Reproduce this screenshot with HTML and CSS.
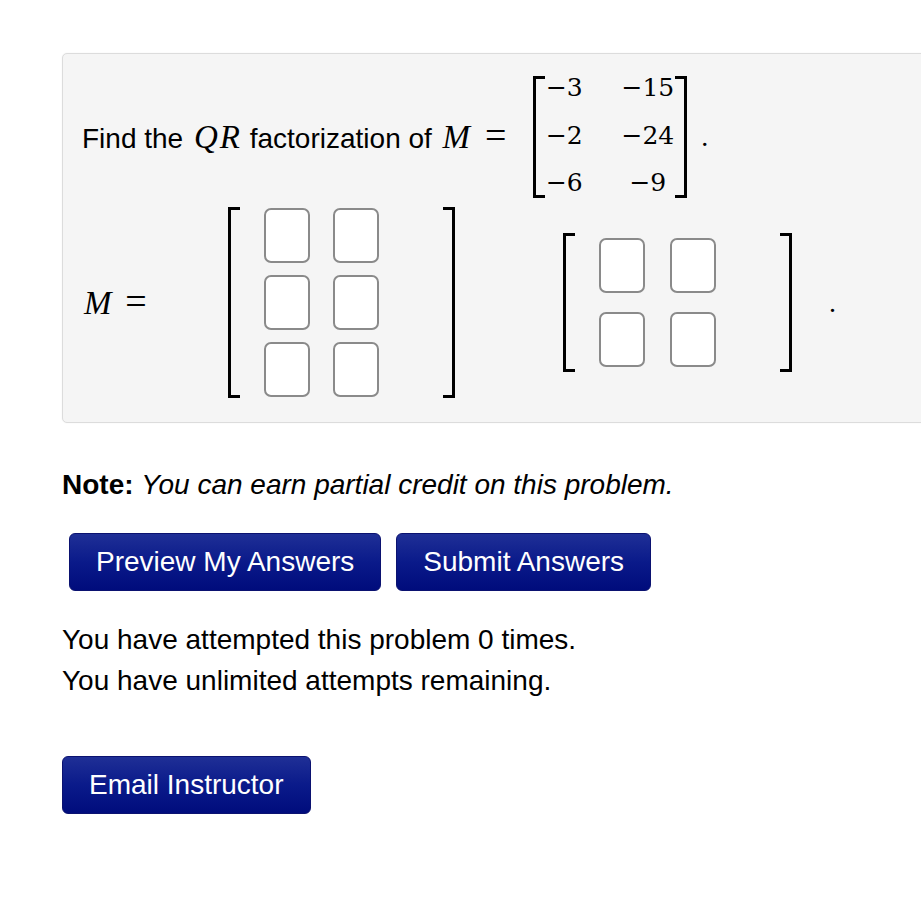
FILE: index.html
```html
<!DOCTYPE html>
<html lang="en">
<head>
    <meta charset="UTF-8">
    <title>QR factorization</title>
    <link rel="stylesheet" href="styles.css">
</head>
<body>
<div id="page">
    <div class="problem">
        <div class="row row-given">
            <span class="lead">Find the <span class="mi">QR</span> factorization of <span class="mi">M</span> <span class="mo">=</span></span>
            <div class="matrix given">
                <div class="br br-l"></div>
                <div class="cells">
                    <span>&minus;3</span><span>&minus;15</span>
                    <span>&minus;2</span><span>&minus;24</span>
                    <span>&minus;6</span><span>&minus;9</span>
                </div>
                <div class="br br-r"></div>
            </div>
            <span class="dot">.</span>
        </div>
        <div class="row row-answer">
            <span class="lhs"><span class="mi">M</span> <span class="mo">=</span></span>
            <div class="matrix blanks q">
                <div class="br br-l"></div>
                <div class="cells">
                    <input type="text"><input type="text">
                    <input type="text"><input type="text">
                    <input type="text"><input type="text">
                </div>
                <div class="br br-r"></div>
            </div>
            <div class="matrix blanks r">
                <div class="br br-l"></div>
                <div class="cells">
                    <input type="text"><input type="text">
                    <input type="text"><input type="text">
                </div>
                <div class="br br-r"></div>
            </div>
            <span class="dot end">.</span>
        </div>
    </div>

    <p class="note"><b>Note:</b> <i>You can earn partial credit on this problem.</i></p>

    <div class="buttons">
        <button class="btn preview">Preview My Answers</button>
        <button class="btn">Submit Answers</button>
    </div>

    <p class="attempts">You have attempted this problem 0 times.<br>You have unlimited attempts remaining.</p>

    <button class="btn email">Email Instructor</button>
</div>
</body>
</html>
```

FILE: styles.css
```css
html,body,div,p{margin:0;padding:0;}
body{background:#fff;color:#000;font:28px/40px "Liberation Sans",Arial,sans-serif;overflow-x:hidden;}
#page{padding:53px 0 0 62px;}

.problem{width:880px;background:#f5f5f5;border:1px solid #dcdcdc;border-radius:5px;box-shadow:0 0 2px rgba(0,0,0,.06);padding:22px 0 24px 19px;box-sizing:border-box;}
.row{display:flex;align-items:center;}
.row-answer{margin-top:9px;}

.mi{font-family:"Liberation Serif","Times New Roman",serif;font-style:italic;font-size:33px;letter-spacing:2px;}
.mo{font-family:"Liberation Serif","Times New Roman",serif;font-size:38px;margin-left:4px;}
.row-given .mi{margin-left:3px;}
.row-given .mo{margin-left:5px;}
.lead{white-space:nowrap;margin-right:27px;}
.lhs{width:146px;padding-left:2px;box-sizing:border-box;}

.matrix{display:flex;align-items:stretch;}
.br{width:10px;border:3px solid #000;}
.br-l{border-right:0;}
.br-r{border-left:0;}

.given .cells{display:grid;grid-template-columns:38px 55px;column-gap:37px;row-gap:23.5px;padding:0 0 3px 0;justify-items:center;font:25px/24px "DejaVu Serif","Liberation Serif",serif;}
.given .br{width:9px;}

.blanks .br{width:9px;}
.blanks .cells{display:grid;grid-template-columns:46px 46px;}
.blanks input{width:46px;height:55px;box-sizing:border-box;border:2px solid #8a8a8a;border-radius:7px;background:#fff;padding:0;margin:0;}
.q .cells{column-gap:23px;row-gap:12px;padding:1px 64px 1px 24px;}
.r{margin-left:108px;}
.r .cells{column-gap:25px;row-gap:19px;padding:5px 64px 5px 24px;}

.dot{margin-left:14px;font-family:"Liberation Serif","Times New Roman",serif;}
.dot.end{margin-left:37px;}

.note{margin-top:42px;}
.buttons{display:flex;gap:15px;margin:28px 0 0 7px;}
.btn{font:28px/32px "Liberation Sans",Arial,sans-serif;color:#fff;padding:12px 26px;border:1px solid #0b1270;border-radius:6px;background:linear-gradient(#1f2f96,#0a1a8a 50%,#000c7c);cursor:pointer;}
.attempts{margin-top:28px;line-height:41px;}
.email{margin-top:55px;}
```
